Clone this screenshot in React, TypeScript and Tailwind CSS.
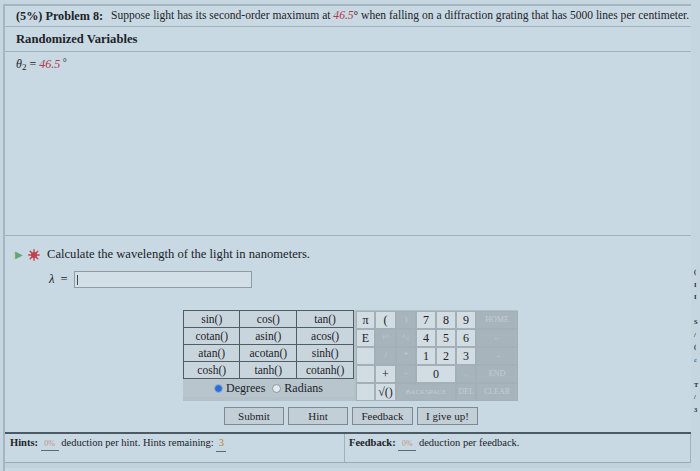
import React from "react";

const trig = [
  ["sin()", "cos()", "tan()"],
  ["cotan()", "asin()", "acos()"],
  ["atan()", "acotan()", "sinh()"],
  ["cosh()", "tanh()", "cotanh()"],
];

type Key = { t: string; on: boolean; span?: number };

const keys: Key[][] = [
  [{ t: "π", on: true }, { t: "(", on: true }, { t: ")", on: false }, { t: "7", on: true }, { t: "8", on: true }, { t: "9", on: true }, { t: "HOME", on: false }],
  [{ t: "E", on: true }, { t: "↑^", on: false }, { t: "^↓", on: false }, { t: "4", on: true }, { t: "5", on: true }, { t: "6", on: true }, { t: "←", on: false }],
  [{ t: "", on: true }, { t: "/", on: false }, { t: "*", on: false }, { t: "1", on: true }, { t: "2", on: true }, { t: "3", on: true }, { t: "→", on: false }],
  [{ t: "", on: true }, { t: "+", on: true }, { t: "-", on: false }, { t: "0", on: true, span: 2 }, { t: ".", on: false }, { t: "END", on: false }],
  [{ t: "", on: true }, { t: "√()", on: true }, { t: "BACKSPACE", on: false, span: 3 }, { t: "DEL", on: false }, { t: "CLEAR", on: false }],
];

const edge = ["(", "I", "I", "", "S", "/", "(", "c", "", "T", "/", "3"];

function Bug() {
  return (
    <svg width="12" height="12" viewBox="0 0 12 12">
      <circle cx="6" cy="6" r="3" fill="#c2414f" />
      <g stroke="#c2414f" strokeWidth="1.4" strokeLinecap="round">
        <line x1="6" y1="0.8" x2="6" y2="11.2" />
        <line x1="0.8" y1="6" x2="11.2" y2="6" />
        <line x1="2.2" y1="2.2" x2="9.8" y2="9.8" />
        <line x1="9.8" y1="2.2" x2="2.2" y2="9.8" />
      </g>
    </svg>
  );
}

export default function App(): React.ReactElement {
  return (
    <div
      className="w-[700px] h-[471px] overflow-hidden bg-[#c5d6e0] text-[#1d2328] flex"
      style={{ fontFamily: '"Liberation Serif", "Times New Roman", serif' }}
    >
      <div className="flex-1 flex flex-col pt-[4px] pl-[3px]">
        <div className="flex-1 flex flex-col border-l-[2px] border-t-[2px] border-[#a6b5bf] bg-[#c8d9e3]">
          {/* problem statement */}
          <div className="h-[21px] border-b border-[#9fb1bc] pl-[11px] flex items-center text-[11.55px] whitespace-nowrap">
            <span className="font-bold text-[12.2px]">(5%) Problem 8:</span>
            <span className="ml-[8px]">
              Suppose light has its second-order maximum at{" "}
              <span className="italic text-[#b33a4a]">46.5</span>° when falling on a diffraction grating that has 5000 lines per
              centimeter.
            </span>
          </div>
          <div className="h-[25px] border-b border-[#9fb1bc] pl-[11px] flex items-center text-[12.6px] font-bold">
            Randomized Variables
          </div>
          <div className="h-[184px] border-b border-[#9fb1bc] pl-[11px] pt-[3px] text-[12px]">
            <span className="italic">θ</span>
            <sub className="text-[9px]">2</sub>
            <span> = </span>
            <span className="italic text-[#b33a4a]">46.5</span>
            <span className="text-[10px] align-top"> °</span>
          </div>

          {/* question */}
          <div className="flex flex-col">
            <div className="h-[33px] pl-[10px] flex items-center gap-[5px] pt-[4px] text-[12.6px]">
              <span className="text-[#6aa46d] text-[10px]">▶</span>
              <Bug />
              <span className="ml-[2px]">Calculate the wavelength of the light in nanometers.</span>
            </div>
            <div className="h-[17px] mt-[2px] pl-[44px] flex items-center gap-[6px] text-[12.6px]">
              <span className="italic">λ</span>
              <span>=</span>
              <div className="w-[178px] h-[17px] border border-[#8f9ca4] bg-[#d2dfe7] flex items-center pl-[2px]">
                <span className="w-px h-[10px] bg-[#3c4a52]" />
              </div>
            </div>

            {/* calculator */}
            <div className="mt-[22px] ml-[178px] flex gap-[2px] items-start bg-[#b4c1c9] w-[335px]">
              <div className="w-[173px]">
                <table className="border-collapse w-full text-[11.5px]">
                  <tbody>
                    {trig.map((r) => (
                      <tr key={r[0]} className="h-[17px]">
                        {r.map((c) => (
                          <td key={c} className="border border-[#4f5d66] bg-[#c9d5dc] text-center leading-[15px] w-[58px]">
                            {c}
                          </td>
                        ))}
                      </tr>
                    ))}
                  </tbody>
                </table>
                <div className="h-[18px] flex items-center justify-center gap-[3px] text-[12px] bg-[#b8c5cd]">
                  <span className="w-[9px] h-[9px] rounded-full bg-[#2d6fd0] border border-[#9cb6d6]" />
                  <span>Degrees</span>
                  <span className="ml-[4px] w-[9px] h-[9px] rounded-full bg-[#e3ebf0] border border-[#8a99a3]" />
                  <span>Radians</span>
                </div>
              </div>
              <div className="grid grid-cols-[17px_19px_18px_18px_18px_18px_40px] auto-rows-[16px] gap-[2px] bg-[#a3b0b8] p-[1px] mt-[1px]">
                {keys.flatMap((row, ri) =>
                  row.map((k, ki) => (
                    <div
                      key={`${ri}-${ki}`}
                      className={
                        k.span === 3
                          ? "col-span-3 flex items-center justify-center bg-[#a8b4bc] text-[#c3ccd2] text-[7px]"
                          : k.span === 2
                          ? "col-span-2 flex items-center justify-center bg-[#d1dce3] text-[12px]"
                          : k.on
                          ? "flex items-center justify-center bg-[#d1dce3] text-[12px]"
                          : "flex items-center justify-center bg-[#a8b4bc] text-[#c3ccd2] text-[8px]"
                      }
                    >
                      {k.t}
                    </div>
                  ))
                )}
              </div>
            </div>

            {/* buttons */}
            <div className="mt-[6px] ml-[219px] flex gap-[4px] text-[11px]">
              {["Submit", "Hint", "Feedback", "I give up!"].map((b, i) => (
                <div
                  key={b}
                  className={
                    i < 2
                      ? "w-[60px] h-[18px] border border-[#7d8a92] bg-[#c3cfd6] flex items-center justify-center"
                      : "w-[61px] h-[18px] border border-[#7d8a92] bg-[#c3cfd6] flex items-center justify-center"
                  }
                >
                  {b}
                </div>
              ))}
            </div>
          </div>

          {/* hints / feedback */}
          <div className="mt-[7px] h-[30px] border-t-[2px] border-[#4d5963] flex text-[10.5px]">
            <div className="w-[340px] border-r border-[#9fb1bc] pl-[5px] pt-[1px]">
              <span className="font-bold">Hints:</span>{" "}
              <span className="inline-block w-[18px] border-b border-[#5b6a74] text-center text-[#c49580] text-[8px]">0%</span>{" "}
              deduction per hint. Hints remaining:{" "}
              <span className="inline-block w-[10px] border-b border-[#5b6a74] text-center text-[#b8862f]">3</span>
            </div>
            <div className="flex-1 pl-[4px] pt-[1px] border-r border-[#9fb1bc]">
              <span className="font-bold">Feedback:</span>{" "}
              <span className="inline-block w-[18px] border-b border-[#5b6a74] text-center text-[#c49580] text-[8px]">0%</span>{" "}
              deduction per feedback.
            </div>
          </div>
          <div className="h-[6px] border-t border-[#9aabb6] bg-[#c1d2dc]" />
        </div>
      </div>

      {/* neighbour column at the right edge */}
      <div className="w-[9px] pt-[266px] pl-[3px] flex flex-col text-[6.5px] leading-[12.5px] font-bold">
        {edge.map((c, i) => (
          <span key={i} className={c === "c" ? "text-[#3a6fb0] h-[12.5px]" : "h-[12.5px]"}>
            {c}
          </span>
        ))}
      </div>
    </div>
  );
}
